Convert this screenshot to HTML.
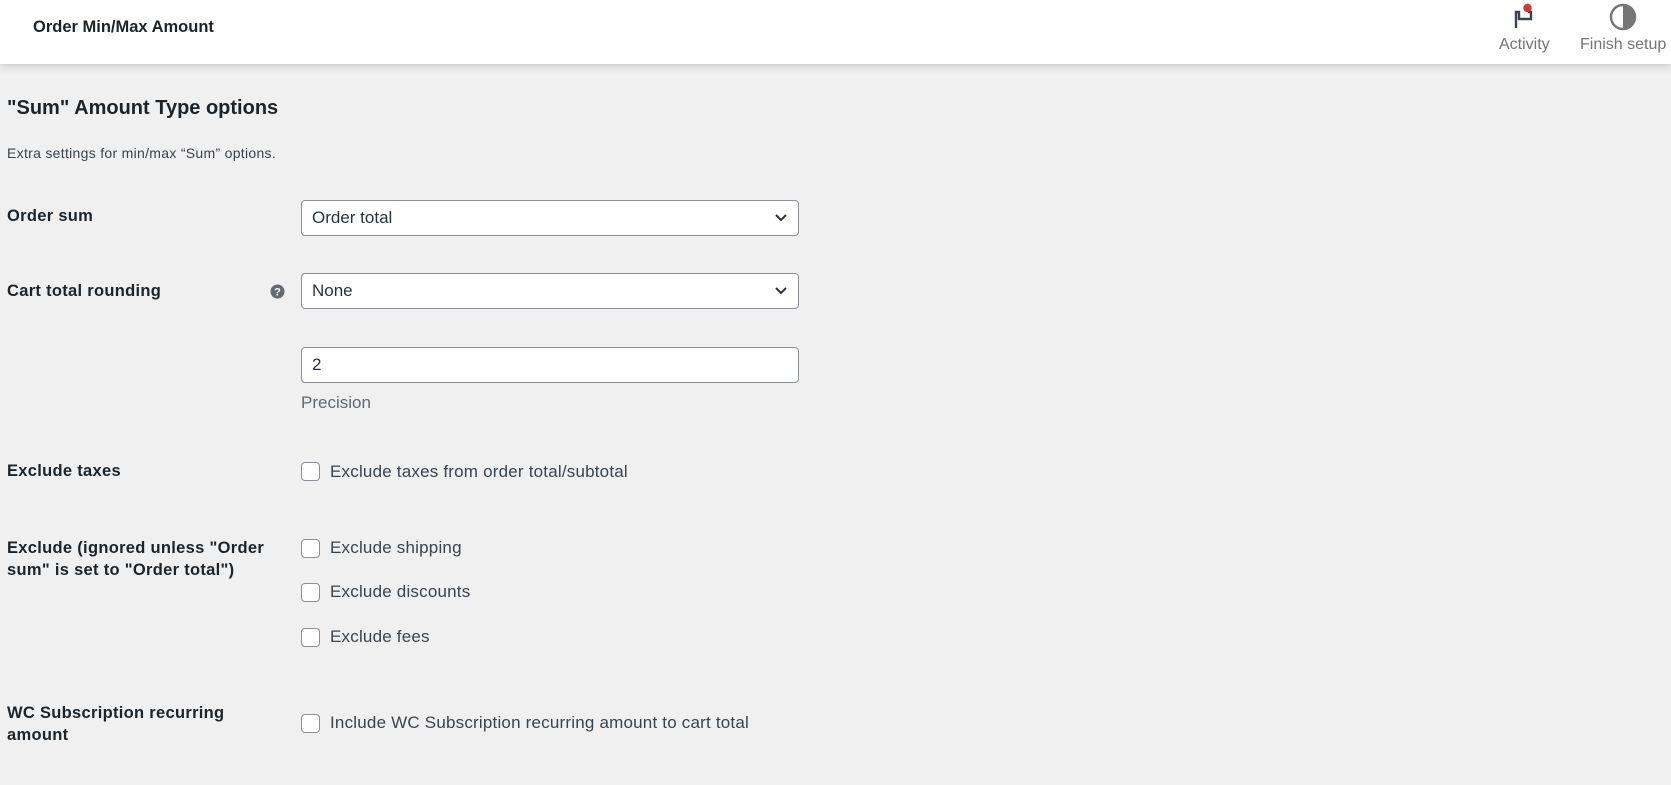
<!DOCTYPE html>
<html><head><style>
*{box-sizing:border-box;margin:0;padding:0}
body{width:1671px;height:785px;overflow:hidden;background:#f0f0f1;font-family:"Liberation Sans",sans-serif;color:#1d2327;position:relative}
.hdr{position:absolute;left:0;top:0;width:1671px;height:64px;background:#fff;box-shadow:0 2px 8px rgba(0,0,0,.18)}
.a{position:absolute;white-space:nowrap}
.lbl{font-weight:bold;font-size:16.5px;line-height:22px;letter-spacing:.3px}
.sel,.inp{position:absolute;left:301px;width:498px;height:36px;background:#fff;border:1px solid #8c8f94;border-radius:4px;font-size:17px;padding:0 10px;line-height:34px;color:#2c3338}
.cb{position:absolute;left:301px;width:19px;height:19px;background:#fff;border:1px solid #8c8f94;border-radius:4px}
.ct{position:absolute;left:330px;font-size:17px;color:#3c434a;line-height:20px;letter-spacing:.2px}
</style></head><body>
<div class="hdr">
<div class="a" style="left:33px;top:18px;font-size:16.5px;font-weight:600">Order Min/Max Amount</div>
<svg class="a" style="left:1511px;top:2px" width="26" height="28" viewBox="0 0 26 28"><path d="M5 26V10h4M5 10h3v7h12V10h-3" fill="none" stroke="#3c434a" stroke-width="2.4"/><circle cx="16.5" cy="6" r="4.2" fill="#d63638"/></svg>
<div class="a" style="left:1499px;top:36px;font-size:16px;color:#757575">Activity</div>
<svg class="a" style="left:1608px;top:2px" width="30" height="30" viewBox="0 0 30 30"><circle cx="15" cy="15" r="12" fill="none" stroke="#757575" stroke-width="2.4"/><path d="M15 4A11 11 0 0 1 15 26Z" fill="#757575"/></svg>
<div class="a" style="left:1580px;top:36px;font-size:16px;color:#757575">Finish setup</div>
</div>
<div class="a" style="left:7px;top:97px;font-size:20px;font-weight:bold;color:#1d2327">"Sum" Amount Type options</div>
<div class="a" style="left:7px;top:145px;font-size:14px;color:#3c434a;letter-spacing:.3px">Extra settings for min/max “Sum” options.</div>

<div class="a lbl" style="left:7px;top:205px">Order sum</div>
<div class="sel" style="top:200px">Order total<svg style="position:absolute;right:10px;top:12px" width="14" height="10" viewBox="0 0 14 10"><path d="M2 2l5 5 5-5" fill="none" stroke="#2c3338" stroke-width="2"/></svg></div>

<div class="a lbl" style="left:7px;top:280px">Cart total rounding</div>
<svg class="a" style="left:270px;top:284px" width="15" height="15" viewBox="0 0 15 15"><circle cx="7.5" cy="7.5" r="7" fill="#646970"/><text x="7.5" y="11.5" font-size="11" font-weight="bold" fill="#fff" text-anchor="middle" font-family="Liberation Sans">?</text></svg>
<div class="sel" style="top:273px">None<svg style="position:absolute;right:10px;top:12px" width="14" height="10" viewBox="0 0 14 10"><path d="M2 2l5 5 5-5" fill="none" stroke="#2c3338" stroke-width="2"/></svg></div>

<div class="inp" style="top:347px">2</div>
<div class="a" style="left:301px;top:393px;font-size:17px;color:#646970">Precision</div>

<div class="a lbl" style="left:7px;top:460px">Exclude taxes</div>
<div class="cb" style="top:462px"></div><div class="ct" style="top:462px">Exclude taxes from order total/subtotal</div>

<div class="a lbl" style="left:7px;top:537px">Exclude (ignored unless "Order<br>sum" is set to "Order total")</div>
<div class="cb" style="top:539px"></div><div class="ct" style="top:538px">Exclude shipping</div>
<div class="cb" style="top:583px"></div><div class="ct" style="top:582px">Exclude discounts</div>
<div class="cb" style="top:628px"></div><div class="ct" style="top:627px">Exclude fees</div>

<div class="a lbl" style="left:7px;top:702px">WC Subscription recurring<br>amount</div>
<div class="cb" style="top:714px"></div><div class="ct" style="top:713px">Include WC Subscription recurring amount to cart total</div>
</body></html>
